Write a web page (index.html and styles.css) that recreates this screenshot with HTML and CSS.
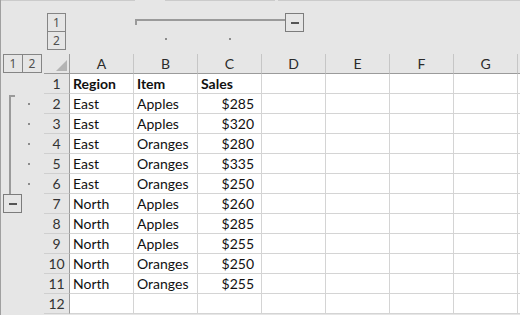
FILE: index.html
```html
<!DOCTYPE html>
<html lang="en">
<head>
    <meta charset="UTF-8">
    <meta name="viewport" content="width=device-width, initial-scale=1.0">
    <title>Sales outline</title>
    <link rel="stylesheet" href="styles.css">
</head>
<body>
    <div class="page">
        <div class="topline">
            <span class="seg seg-a"></span>
            <span class="seg seg-b"></span>
            <span class="seg seg-c"></span>
        </div>
        <div class="frame">
            <div class="blank"></div>

            <!-- column outline -->
            <div class="col-outline">
                <div class="col-levels">
                    <div class="lvl">1</div>
                    <div class="lvl">2</div>
                </div>
                <div class="col-group">
                    <div class="hbar">
                        <div class="hline"></div>
                        <div class="toggle"><span class="minus"></span></div>
                    </div>
                    <span class="dot"></span>
                    <span class="dot"></span>
                </div>
            </div>

            <!-- row outline -->
            <div class="row-outline">
                <div class="row-levels">
                    <div class="lvl wide">1</div>
                    <div class="lvl wide">2</div>
                </div>
                <div class="row-body">
                    <div class="group-col">
                        <div class="vline"></div>
                        <div class="toggle"><span class="minus"></span></div>
                    </div>
                    <div class="dot-col">
                        <div class="dot-cell"><span class="dot"></span></div>
                        <div class="dot-cell"><span class="dot"></span></div>
                        <div class="dot-cell"><span class="dot"></span></div>
                        <div class="dot-cell"><span class="dot"></span></div>
                        <div class="dot-cell"><span class="dot"></span></div>
                    </div>
                </div>
            </div>

            <!-- sheet -->
            <div class="cells">
                <div class="corner"><span class="tri"></span></div>
                <div class="ch">A</div><div class="ch">B</div><div class="ch">C</div><div class="ch">D</div>
                <div class="ch">E</div><div class="ch">F</div><div class="ch">G</div><div class="ch"></div>

                <div class="rh">1</div>
                <div class="c b">Region</div><div class="c b">Item</div><div class="c b">Sales</div>
                <div class="c"></div><div class="c"></div><div class="c"></div><div class="c"></div><div class="c"></div>

                <div class="rh">2</div>
                <div class="c">East</div><div class="c">Apples</div><div class="c num">$285</div>
                <div class="c"></div><div class="c"></div><div class="c"></div><div class="c"></div><div class="c"></div>

                <div class="rh">3</div>
                <div class="c">East</div><div class="c">Apples</div><div class="c num">$320</div>
                <div class="c"></div><div class="c"></div><div class="c"></div><div class="c"></div><div class="c"></div>

                <div class="rh">4</div>
                <div class="c">East</div><div class="c">Oranges</div><div class="c num">$280</div>
                <div class="c"></div><div class="c"></div><div class="c"></div><div class="c"></div><div class="c"></div>

                <div class="rh">5</div>
                <div class="c">East</div><div class="c">Oranges</div><div class="c num">$335</div>
                <div class="c"></div><div class="c"></div><div class="c"></div><div class="c"></div><div class="c"></div>

                <div class="rh">6</div>
                <div class="c">East</div><div class="c">Oranges</div><div class="c num">$250</div>
                <div class="c"></div><div class="c"></div><div class="c"></div><div class="c"></div><div class="c"></div>

                <div class="rh">7</div>
                <div class="c">North</div><div class="c">Apples</div><div class="c num">$260</div>
                <div class="c"></div><div class="c"></div><div class="c"></div><div class="c"></div><div class="c"></div>

                <div class="rh">8</div>
                <div class="c">North</div><div class="c">Apples</div><div class="c num">$285</div>
                <div class="c"></div><div class="c"></div><div class="c"></div><div class="c"></div><div class="c"></div>

                <div class="rh">9</div>
                <div class="c">North</div><div class="c">Apples</div><div class="c num">$255</div>
                <div class="c"></div><div class="c"></div><div class="c"></div><div class="c"></div><div class="c"></div>

                <div class="rh">10</div>
                <div class="c">North</div><div class="c">Oranges</div><div class="c num">$250</div>
                <div class="c"></div><div class="c"></div><div class="c"></div><div class="c"></div><div class="c"></div>

                <div class="rh">11</div>
                <div class="c">North</div><div class="c">Oranges</div><div class="c num">$255</div>
                <div class="c"></div><div class="c"></div><div class="c"></div><div class="c"></div><div class="c"></div>

                <div class="rh">12</div>
                <div class="c"></div><div class="c"></div><div class="c"></div>
                <div class="c"></div><div class="c"></div><div class="c"></div><div class="c"></div><div class="c"></div>
            </div>
        </div>
    </div>
</body>
</html>
```

FILE: styles.css
```css
* {
    box-sizing: border-box;
}
body {
    margin: 0;
    width: 520px;
    height: 315px;
    overflow: hidden;
    background-color: #e6e6e6;
    font-family: Lato, "Liberation Sans", sans-serif;
}
.page {
    height: 315px;
    border-left: 1px solid #a0a0a0;
}
.topline {
    display: flex;
    height: 1px;
}
.seg {
    height: 1px;
    background-color: #cbcbcb;
}
.seg-a {
    width: 134px;
}
.seg-b {
    width: 110px;
    margin-left: 30px;
}
.seg-c {
    flex: 1;
    margin-left: 3px;
}
.frame {
    display: grid;
    grid-template-columns: 43px 1fr;
    grid-template-rows: 53px auto;
    overflow: hidden;
}

/* outline controls */
.lvl {
    width: 19px;
    height: 19px;
    border: 1px solid #858585;
    display: flex;
    align-items: center;
    justify-content: center;
    font-family: "Noto Sans", sans-serif;
    font-size: 12px;
    color: #505050;
}
.lvl.wide {
    width: 20px;
}
.toggle {
    width: 19px;
    height: 19px;
    border: 1px solid #7c7c7c;
    display: flex;
    align-items: center;
    justify-content: center;
    flex: none;
}
.minus {
    width: 8px;
    height: 2px;
    background-color: #555;
}
.dot {
    display: block;
    width: 2px;
    height: 2px;
    background-color: #8c8c8c;
}
.col-outline {
    display: grid;
    grid-template-columns: 26px repeat(7, 64px) 1fr;
}
.col-levels {
    padding: 12px 0 0 3px;
}
.col-levels .lvl + .lvl {
    margin-top: -1px;
}
.col-group {
    grid-column: 3 / 6;
    display: grid;
    grid-template-columns: repeat(3, 64px);
    grid-auto-rows: min-content;
    padding-top: 12px;
}
.hbar {
    grid-column: 1 / -1;
    display: flex;
    align-items: flex-start;
    padding: 0 22px 0 1px;
}
.hline {
    flex: 1;
    height: 6px;
    margin-top: 6px;
    border-top: 2px solid #9a9a9a;
    border-left: 2px solid #9a9a9a;
}
.col-group .dot {
    justify-self: center;
    margin-top: 6px;
}
.row-levels {
    display: flex;
    height: 20px;
    padding-left: 2px;
}
.row-levels .lvl + .lvl {
    margin-left: -1px;
}
.row-body {
    display: flex;
}
.group-col {
    width: 21px;
    padding-top: 21px;
}
.vline {
    width: 6px;
    height: 99px;
    margin-left: 8px;
    border-top: 2px solid #9a9a9a;
    border-left: 2px solid #9a9a9a;
}
.group-col .toggle {
    margin-left: 2px;
}
.dot-col {
    width: 22px;
    padding-top: 20px;
}
.dot-cell {
    height: 20px;
    padding: 0 0 1px 6px;
    display: flex;
    align-items: center;
}

/* sheet */
.cells {
    display: grid;
    grid-template-columns: 26px repeat(7, 64px) 1fr;
    grid-auto-rows: 20px;
    font-size: 14px;
}
.corner {
    border-right: 1px solid #9b9b9b;
    border-bottom: 1px solid #9b9b9b;
    display: flex;
    align-items: flex-end;
    justify-content: flex-end;
    padding: 0 2px 2px 0;
}
.tri {
    width: 0;
    height: 0;
    border-left: 11px solid transparent;
    border-bottom: 11px solid #b4b4b4;
}
.ch {
    border-right: 1px solid #c6c6c6;
    border-bottom: 1px solid #9b9b9b;
    display: flex;
    align-items: center;
    justify-content: center;
    color: #2b2b2b;
}
.rh {
    border-right: 1px solid #9b9b9b;
    border-bottom: 1px solid #cfcfcf;
    text-align: center;
    line-height: 19px;
    color: #333;
}
.c {
    background-color: #fff;
    border-right: 1px solid #d4d4d4;
    border-bottom: 1px solid #d4d4d4;
    padding: 0 3px;
    line-height: 19px;
    white-space: nowrap;
    overflow: hidden;
    color: #111;
}
.c.b {
    font-weight: bold;
}
.c.num {
    text-align: right;
    padding-right: 7px;
}
```
